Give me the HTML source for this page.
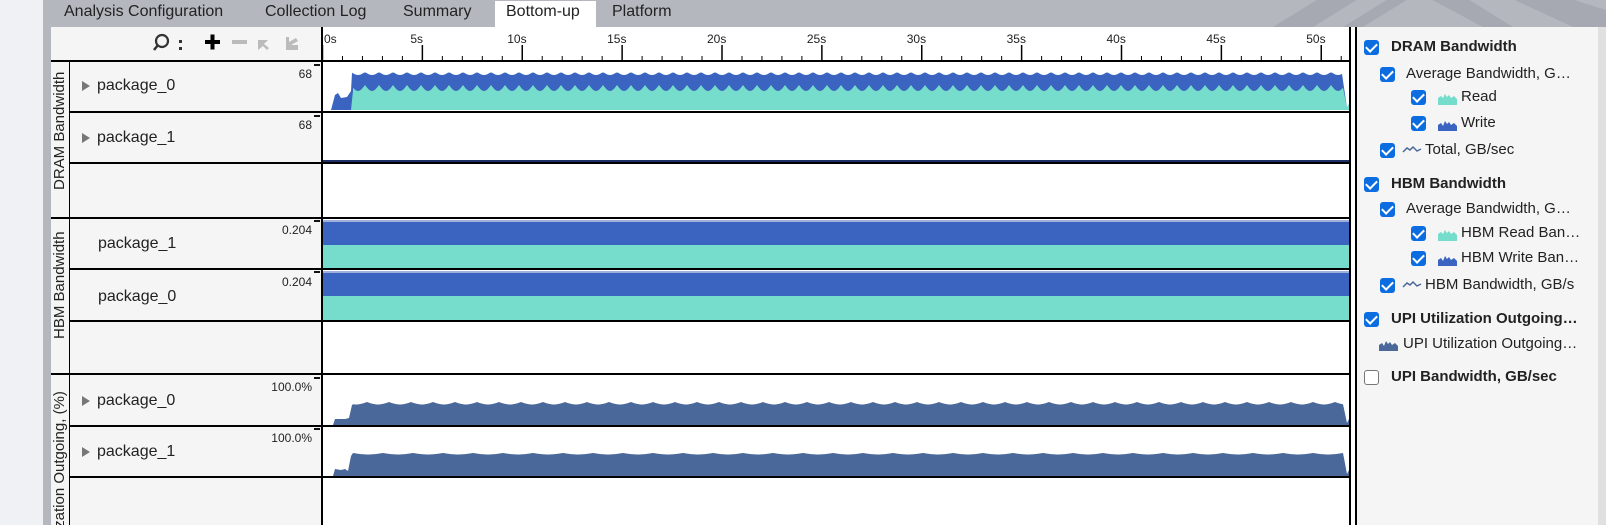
<!DOCTYPE html>
<html><head><meta charset="utf-8"><style>
*{margin:0;padding:0;box-sizing:border-box}
html,body{overflow:hidden}
body{width:1606px;height:525px;background:#eff1f4;font-family:"Liberation Sans",sans-serif;position:relative;color:#222}
.a{position:absolute}
.tab{position:absolute;top:3px;font-size:16px;color:#222}
.lbl{position:absolute;font-size:16px;color:#222}
.tri{position:absolute;width:0;height:0;border-left:8px solid #777;border-top:5px solid transparent;border-bottom:5px solid transparent}
.val{position:absolute;font-size:12px;color:#222;text-align:right;width:60px}
.dash{position:absolute;width:6px;height:2px;background:#111}
.hl{position:absolute;left:69px;width:1281px;height:2px;background:#000}
.vt{position:absolute;transform-origin:0 0;transform:rotate(-90deg);font-size:15px;white-space:nowrap;line-height:17px;color:#222}
.cb{position:absolute;width:15px;height:15px;border-radius:3px;background:#0b6de0}
.cb:after{content:"";position:absolute;left:4px;top:1px;width:5px;height:9px;border:solid #fff;border-width:0 2.4px 2.4px 0;transform:rotate(45deg)}
.cbn{position:absolute;width:15px;height:15px;border-radius:3px;border:1.5px solid #777;background:#fff}
.rt{position:absolute;font-size:15px;color:#222;white-space:nowrap}
.b{font-weight:bold}
</style></head><body>
<div class="a" style="left:43px;top:0;width:8px;height:525px;background:#b4b7be"></div>
<div class="a" style="left:43px;top:0;width:1563px;height:27px;background:#b4b7be;overflow:hidden">
<svg width="1563" height="27" style="position:absolute;left:0;top:0"><path d="M1230 27 L1290 -10 L1330 -10 L1270 27Z M1300 27 L1360 -10 L1380 -10 L1320 27Z M1380 -5 L1440 27 L1470 27 L1410 -10Z M1450 -10 L1530 27 L1563 27 L1563 10 L1500 -10Z" fill="#a6a9b1"/></svg>
</div>
<div class="tab" style="left:64px">Analysis Configuration</div>
<div class="tab" style="left:265px">Collection Log</div>
<div class="tab" style="left:403px">Summary</div>
<div class="a" style="left:495px;top:1px;width:101px;height:26px;background:#fff"></div>
<div class="tab" style="left:506px">Bottom-up</div>
<div class="tab" style="left:612px">Platform</div>
<div class="a" style="left:51px;top:27px;width:1299px;height:498px;background:#f5f5f5"></div>
<div class="a" style="left:322px;top:27px;width:1028px;height:498px;background:#fff"></div>
<div class="a" style="left:321px;top:27px;width:2px;height:498px;background:#000"></div>
<div class="a" style="left:51px;top:60px;width:1299px;height:2px;background:#000"></div>
<div class="a" style="left:69px;top:61px;width:1px;height:464px;background:#000"></div>
<svg class="a" style="left:150px;top:30px" width="170" height="28">
<circle cx="12" cy="11" r="6" fill="none" stroke="#333" stroke-width="2.2"/><line x1="8" y1="15" x2="4" y2="20" stroke="#333" stroke-width="2.5"/>
<rect x="29" y="10" width="3" height="3" fill="#333"/><rect x="29" y="17" width="3" height="3" fill="#333"/>
<rect x="55" y="10" width="15" height="4" fill="#000"/><rect x="60.5" y="4.5" width="4" height="15" fill="#000"/>
<rect x="82" y="10" width="15" height="4" fill="#bbb"/>
<path d="M108 20 L108 10 L118 10 L114 14 L119 18 L117 20 L113 16 Z" fill="#bbb"/>
<path d="M136 20 L136 7 L139 7 L139 12 L146 8 L148 11 L141 15 L148 15 L148 20 Z" fill="#bbb"/>
</svg>
<svg id="ax" class="a" style="left:322px;top:27px" width="1028" height="34"></svg>
<div class="hl" style="top:111px"></div>
<div class="hl" style="top:162px"></div>
<div class="a" style="left:51px;top:217px;width:1299px;height:2px;background:#000"></div>
<div class="hl" style="top:268px"></div>
<div class="hl" style="top:320px"></div>
<div class="a" style="left:51px;top:373px;width:1299px;height:2px;background:#000"></div>
<div class="hl" style="top:425px"></div>
<div class="hl" style="top:476px"></div>
<div class="a" style="left:51px;top:61px;width:18px;height:464px;overflow:hidden">
<div class="vt" style="left:0px;top:129px">DRAM Bandwidth</div>
<div class="vt" style="left:0px;top:278px">HBM Bandwidth</div>
<div class="vt" style="left:0px;top:521px">UPI Utilization Outgoing, (%)</div>
</div>
<div class="tri" style="left:82px;top:81px"></div><div class="lbl" style="left:97px;top:77px">package_0</div>
<div class="val" style="left:252px;top:67px">68</div><div class="dash" style="left:314px;top:64px"></div>
<div class="tri" style="left:82px;top:133px"></div><div class="lbl" style="left:97px;top:129px">package_1</div>
<div class="val" style="left:252px;top:118px">68</div><div class="dash" style="left:314px;top:115px"></div>
<div class="lbl" style="left:98px;top:235px">package_1</div>
<div class="val" style="left:252px;top:223px">0.204</div><div class="dash" style="left:314px;top:220px"></div>
<div class="lbl" style="left:98px;top:288px">package_0</div>
<div class="val" style="left:252px;top:275px">0.204</div><div class="dash" style="left:314px;top:271px"></div>
<div class="tri" style="left:82px;top:396px"></div><div class="lbl" style="left:97px;top:392px">package_0</div>
<div class="val" style="left:252px;top:380px">100.0%</div><div class="dash" style="left:314px;top:377px"></div>
<div class="tri" style="left:82px;top:447px"></div><div class="lbl" style="left:97px;top:443px">package_1</div>
<div class="val" style="left:252px;top:431px">100.0%</div><div class="dash" style="left:314px;top:428px"></div>
<svg class="a" style="left:323px;top:61px" width="1027" height="464">
<path id="d0b" fill="#3a64c0"/><path id="d0t" fill="#76dccb"/>
<line x1="0" y1="100" x2="1027" y2="100" stroke="#1e2f66" stroke-width="2"/>
<rect x="0" y="161" width="1027" height="23" fill="#3a64c0"/><rect x="0" y="159" width="1027" height="2" fill="#9fb0dd"/>
<rect x="0" y="184" width="1027" height="23" fill="#76dccb"/>
<rect x="0" y="212" width="1027" height="23" fill="#3a64c0"/><rect x="0" y="210" width="1027" height="2" fill="#9fb0dd"/>
<rect x="0" y="235" width="1027" height="24" fill="#76dccb"/>
<path id="u0" fill="#4a6899"/><path id="u1" fill="#4a6899"/>
</svg>
<div class="a" style="left:1349px;top:27px;width:2px;height:498px;background:#000"></div>
<div class="a" style="left:1351px;top:27px;width:4px;height:498px;background:#fff"></div>
<div class="a" style="left:1355px;top:27px;width:2px;height:498px;background:#000"></div>
<div class="a" style="left:1357px;top:27px;width:241px;height:498px;background:#f5f5f5"></div>
<div class="a" style="left:1598px;top:27px;width:8px;height:498px;background:#e0e0e0"></div>
<div class="cb" style="left:1364px;top:40px"></div><div class="rt b" style="left:1391px;top:38px">DRAM Bandwidth</div>
<div class="cb" style="left:1380px;top:67px"></div><div class="rt" style="left:1406px;top:65px">Average Bandwidth, G…</div>
<div class="cb" style="left:1411px;top:90px"></div>
<svg class="a" style="left:1438px;top:92px" width="20" height="13"><path d="M0 13 L0 6 L3 4 L5 6 L7 2 L9 5 L11 3 L13 6 L16 4 L19 7 L19 13Z" fill="#76dccb"/></svg>
<div class="rt" style="left:1461px;top:88px">Read</div>
<div class="cb" style="left:1411px;top:116px"></div>
<svg class="a" style="left:1438px;top:118px" width="20" height="13"><path d="M0 13 L0 7 L3 5 L5 8 L7 3 L9 6 L11 4 L13 7 L16 5 L19 8 L19 13Z" fill="#3a64c0"/></svg>
<div class="rt" style="left:1461px;top:114px">Write</div>
<div class="cb" style="left:1380px;top:143px"></div>
<svg class="a" style="left:1402px;top:143px" width="20" height="12"><path d="M1 9 L5 5 L8 7 L11 4 L15 8 L19 6" fill="none" stroke="#4a6899" stroke-width="1.5"/></svg>
<div class="rt" style="left:1425px;top:141px">Total, GB/sec</div>
<div class="cb" style="left:1364px;top:177px"></div><div class="rt b" style="left:1391px;top:175px">HBM Bandwidth</div>
<div class="cb" style="left:1380px;top:202px"></div><div class="rt" style="left:1406px;top:200px">Average Bandwidth, G…</div>
<div class="cb" style="left:1411px;top:226px"></div>
<svg class="a" style="left:1438px;top:228px" width="20" height="13"><path d="M0 13 L0 6 L3 4 L5 6 L7 2 L9 5 L11 3 L13 6 L16 4 L19 7 L19 13Z" fill="#76dccb"/></svg>
<div class="rt" style="left:1461px;top:224px">HBM Read Ban…</div>
<div class="cb" style="left:1411px;top:251px"></div>
<svg class="a" style="left:1438px;top:253px" width="20" height="13"><path d="M0 13 L0 7 L3 5 L5 8 L7 3 L9 6 L11 4 L13 7 L16 5 L19 8 L19 13Z" fill="#3a64c0"/></svg>
<div class="rt" style="left:1461px;top:249px">HBM Write Ban…</div>
<div class="cb" style="left:1380px;top:278px"></div>
<svg class="a" style="left:1402px;top:278px" width="20" height="12"><path d="M1 9 L5 5 L8 7 L11 4 L15 8 L19 6" fill="none" stroke="#4a6899" stroke-width="1.5"/></svg>
<div class="rt" style="left:1425px;top:276px">HBM Bandwidth, GB/s</div>
<div class="cb" style="left:1364px;top:312px"></div><div class="rt b" style="left:1391px;top:310px">UPI Utilization Outgoing…</div>
<svg class="a" style="left:1379px;top:338px" width="20" height="13"><path d="M0 13 L0 7 L3 5 L5 8 L7 3 L9 6 L11 4 L13 7 L16 5 L19 8 L19 13Z" fill="#4a6899"/></svg>
<div class="rt" style="left:1403px;top:335px">UPI Utilization Outgoing…</div>
<div class="cbn" style="left:1364px;top:370px"></div><div class="rt b" style="left:1391px;top:368px">UPI Bandwidth, GB/sec</div>
<script>
var ax=document.getElementById('ax'),s='';
for(var i=0;i<=51;i++){var x=0.5+i*19.975;var big=i%5==0;s+='<line x1="'+x+'" x2="'+x+'" y1="'+(big?18:29)+'" y2="34" stroke="#000" stroke-width="'+(big?1.5:1)+'"/>';
if(big)s+='<text x="'+(i==0?2:x-12+(i>=10?-3:0))+'" y="16" font-size="12" font-family="Liberation Sans" fill="#222">'+i+'s</text>';}
ax.innerHTML=s;
function wave(top,amp,period,x0,x1,bottom,lead){var p='M0 '+bottom+' '+lead;for(var x=x0;x<=x1;x+=2){p+=' L'+x+' '+(top+amp*Math.abs(Math.sin(Math.PI*x/period)));}p+=' L'+(x1+4)+' '+(bottom-2)+' L1027 '+(bottom-8)+' L1027 '+bottom+'Z';return p;}
document.getElementById('d0b').setAttribute('d',wave(11,3,14,29,1020,49,'L8 49 L12 34 L15 32 L18 37 L24 36 L28 30'));
document.getElementById('d0t').setAttribute('d',wave(24,6,14,30,1020,49,'L28 49 L30 30'));
document.getElementById('u0').setAttribute('d',wave(341,2.5,22,30,1020,364,'L10 364 L12 358 L22 358 L26 357 L29 344'));
document.getElementById('u1').setAttribute('d',wave(392,1.5,30,30,1020,415,'L10 415 L12 408 L18 409 L22 408 L25 410 L28 395'));
</script>
</body></html>
